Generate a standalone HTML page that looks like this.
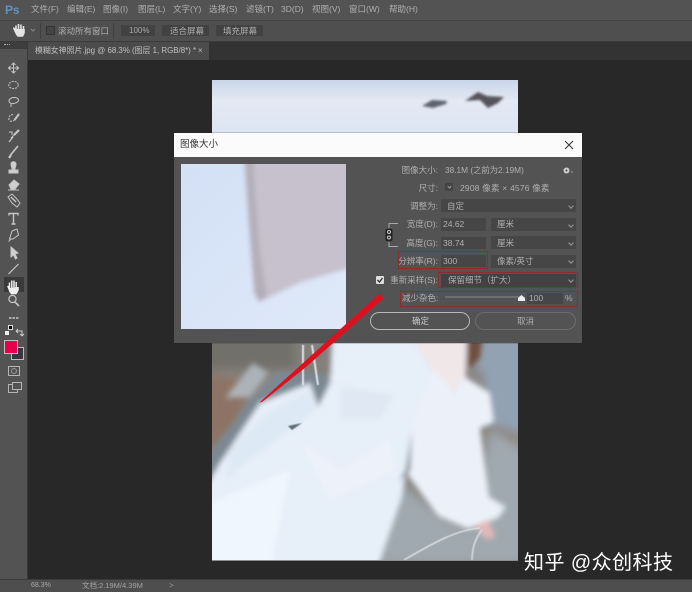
<!DOCTYPE html>
<html lang="zh"><head><meta charset="utf-8"><title>Image Size</title>
<style>
html,body{margin:0;padding:0;background:#282828}
#p{position:relative;width:692px;height:592px;overflow:hidden;background:#282828;font-family:"Liberation Sans","Noto Sans CJK SC",sans-serif;color:#b0b0b0}
.a{position:absolute}
.t{position:absolute;white-space:nowrap;font-size:8.5px;line-height:12px;filter:blur(.3px)}
.r{text-align:right}
.f{position:absolute;background:#464646}
.red{position:absolute;border:1.5px solid #8a2d2d;box-sizing:border-box}
.chev{position:absolute;width:3px;height:3px;border-right:1px solid #999;border-bottom:1px solid #999;transform:rotate(45deg)}
</style></head><body><div id="p">

<svg class="a" style="left:0;top:0" width="692" height="592" viewBox="0 0 692 592">
<defs>
<filter id="b1" x="-10%" y="-10%" width="120%" height="120%"><feGaussianBlur stdDeviation="2.600"/></filter>
<filter id="b2"><feGaussianBlur stdDeviation="5"/></filter>
<filter id="b3"><feGaussianBlur stdDeviation=".6"/></filter>
<filter id="b4"><feGaussianBlur stdDeviation="1.200"/></filter>
<clipPath id="c"><rect x="212" y="80" width="306" height="480"/></clipPath>
<linearGradient id="top" x1="0" y1="0" x2="0" y2="1"><stop offset="0" stop-color="#c9d6e8"/><stop offset=".35" stop-color="#e4e9f3"/><stop offset="1" stop-color="#dbe5f3"/></linearGradient>
</defs>
<g clip-path="url(#c)">
<rect x="212" y="80" width="306" height="60" fill="url(#top)"/>
<g filter="url(#b4)">
<path d="M422 106L432 100 447 101 446 104 433 108Z" fill="#5d6470"/>
<path d="M465 101L478 92 487 96 504 97 498 103 488 108 480 100Z" fill="#56535c"/>
</g>
<rect x="212" y="340" width="306" height="220" fill="#8a8786"/>
<g filter="url(#b2)">
<rect x="205" y="335" width="100" height="35" fill="#72706b"/>
<path d="M205 372L250 380 240 425 205 455Z" fill="#8d7365"/>
<path d="M460 335H525V435L480 420 485 380Z" fill="#93a2b2"/>
<path d="M480 420L525 440V462L480 440Z" fill="#8b847d"/>
<path d="M395 480L440 515 470 530 490 430 525 450V565H370Z" fill="#a0a9af"/>
<path d="M295 335H340V400H295Z" fill="#83807c"/>
</g>
<g filter="url(#b1)">
<path d="M225 398L253 363 268 373 250 397Z" fill="#acb2b7"/>
<path d="M250 400L280 372 330 375 330 405 270 420 225 470 205 495 205 460Z" fill="#7b8893"/>
<path d="M205 490L220 463 260 403 310 383 318 407 330 383 332 335H410L433 373 413 427 402 497 377 570H205Z" fill="#e7eff9"/>
<path d="M230 450L270 410 310 390 316 410 290 430 250 460 225 480Z" fill="#dde9f4"/>
<path d="M300 440L340 470 390 440 395 470 330 500Z" fill="#edf2fa"/>
<path d="M340 385L395 395 380 420 340 420Z" fill="#e0e8f3"/>
<path d="M205 505L290 470 270 570H205Z" fill="#eff6fd"/>
<path d="M410 335H467L465 395 453 390 433 373Z" fill="#f0e7e9"/>
<path d="M467 335H483L480 358 470 368 467 366Z" fill="#6f4f40"/>
<path d="M433 370L455 392 465 377 490 393 494 422 480 428 489 497 506 507 498 518 468 529 438 516 408 475 411 427Z" fill="#ecf1f9"/>
<path d="M412 430L406 470 398 482 410 470Z" fill="#5d6874"/>
<path d="M476 525L488 520 495 535 490 540 482 536Z" fill="#e2b8b8"/>
</g>
<path d="M288 426L302 423 292 430Z" fill="#5e6c76" filter="url(#b3)"/>
<path d="M303 345V385M312 345L318 385" stroke="#e9eef4" stroke-width="1.800" fill="none" filter="url(#b3)"/>
<path d="M404 560C430 545 455 530 480 528M472 560C472 545 478 535 482 530" stroke="#e4e8ec" stroke-width="1.300" fill="none" filter="url(#b3)"/>
</g>
<path d="M212 560.500H518" stroke="#8c8c8c" stroke-width="1"/>
</svg>

<!-- top bars -->
<div class="a" style="left:0;top:0;width:692px;height:20px;background:#535353"></div>
<div class="a" style="left:0;top:20px;width:692px;height:22px;background:#4f4f4f;border-top:1px solid #444;box-sizing:border-box"></div>
<div class="a" style="left:0;top:41px;width:692px;height:1px;background:#3a3a3a"></div>
<div class="a" style="left:0;top:42px;width:692px;height:18px;background:#333"></div>
<div class="a" style="left:28px;top:42px;width:181px;height:18px;background:#4b4b4b"></div>
<div class="t" style="left:5px;top:2px;font-size:12px;line-height:16px;font-weight:bold;color:#5f94c4;letter-spacing:-.3px">Ps</div>
<div class="t" style="left:31px;top:3px">文件(F)</div>
<div class="t" style="left:67px;top:3px">编辑(E)</div>
<div class="t" style="left:103px;top:3px">图像(I)</div>
<div class="t" style="left:138px;top:3px">图层(L)</div>
<div class="t" style="left:173px;top:3px">文字(Y)</div>
<div class="t" style="left:209px;top:3px">选择(S)</div>
<div class="t" style="left:246px;top:3px">滤镜(T)</div>
<div class="t" style="left:281px;top:3px">3D(D)</div>
<div class="t" style="left:312px;top:3px">视图(V)</div>
<div class="t" style="left:349px;top:3px">窗口(W)</div>
<div class="t" style="left:389px;top:3px">帮助(H)</div>

<svg class="a" style="left:13px;top:23px" width="22" height="14" viewBox="0 0 22 14"><path d="M3 6V2.500M5.500 6V1M8 6V1.500M10.500 6.500V3M3 6L1 5.500 3.500 11 5 13H9.500L11 10V6" stroke="#e4e4e4" stroke-width="1.600" fill="#e4e4e4"/><path d="M18 6L20 8 22 6" stroke="#888" fill="none"/></svg>
<div class="a" style="left:40px;top:23px;width:1px;height:16px;background:#3f3f3f"></div>
<div class="a" style="left:46px;top:26px;width:7px;height:7px;background:#454545;border:1px solid #333"></div>
<div class="t" style="left:58px;top:25px">滚动所有窗口</div>
<div class="a" style="left:113px;top:23px;width:1px;height:16px;background:#3f3f3f"></div>
<div class="a" style="left:121px;top:25px;width:34px;height:11px;background:#424242"></div>
<div class="t" style="left:129px;top:25px;color:#aaa;font-size:8px">100%</div>
<div class="a" style="left:162px;top:25px;width:47px;height:11px;background:#424242"></div>
<div class="t" style="left:170px;top:25px">适合屏幕</div>
<div class="a" style="left:216px;top:25px;width:47px;height:11px;background:#424242"></div>
<div class="t" style="left:223px;top:25px">填充屏幕</div>
<div class="t" style="left:35px;top:45px;color:#c0c0c0;font-size:7.900px">模糊女神照片.jpg @ 68.3% (图层 1, RGB/8*) *</div>
<div class="t" style="left:198px;top:45px;color:#c0c0c0;font-size:8px">×</div>

<!-- toolbar -->
<div class="a" style="left:0;top:42px;width:27px;height:537px;background:#535353;border-right:1px solid #3a3a3a"></div>
<div class="a" style="left:0;top:42px;width:27px;height:7px;background:#3d3d3d"></div>
<div class="a" style="left:4px;top:44px;width:6px;height:1px;border-top:1px dotted #aaa"></div>
<svg class="a" style="left:0;top:55px" width="27" height="230" viewBox="0 0 27 230" fill="none" stroke="#c6c6c6" stroke-width="1">
<path d="M13.500 8V18M8.500 13H18.500M11.500 10L13.500 8 15.500 10M11.500 16L13.500 18 15.500 16M10.500 11L8.500 13 10.500 15M16.500 11L18.500 13 16.500 15"/>
<ellipse cx="13.500" cy="30" rx="4.800" ry="3.600" stroke-dasharray="2 1"/>
<path d="M9 46C9 42 18 41 18.500 45 18.500 48 13 49 11 48.500L11 52M11 48C9 48 9 46 9 46"/>
<path d="M9 65C8 60 12 59 14 60M10 66C13 67 15 65 15.500 63" stroke-dasharray="2 1"/><path d="M14.500 65L19 59" stroke-width="2"/>
<path d="M9 77L12 77 12 80M11 83L18 76"/><path d="M14 80L19 75" stroke-width="2.200"/><path d="M9 87L13 82" stroke-width="1.300"/>
<g transform="translate(0 -8)"><path d="M10.500 108L18 99" stroke-width="1.700"/><path d="M9 111L11 108" stroke-width="2.200"/></g>
<g transform="translate(0 -13)"><path d="M11 122C11 119 16 119 16 122 16 125 15 125 15 127H12C12 125 11 125 11 122ZM9 128H18V131H9Z" fill="#cfcfcf"/></g>
<g transform="translate(0 -17)"><path d="M9 147L14 142 19 146 15 151H11Z" fill="#cfcfcf"/><path d="M8 152H19"/></g>
<g transform="translate(0 -20)"><path d="M8 162L12 159 16 163 20 168 17 172 12 168Z"/><path d="M11 162L16 167" stroke-width="1.400"/></g>
<g transform="translate(0 -21)"><path d="M9 181.500V179.500H18V181.500M13.500 179.500V190M11.500 190H15.500" stroke-width="1.400"/></g>
<g transform="translate(0 -25)"><path d="M9.500 209L12 201 17 199 18.500 205 13 209Z"/><path d="M8.500 211.500L11 209"/></g>
<g transform="translate(0 -29)"><path d="M11 221V231L13.500 229 15.500 233 17 232 15 228 18 227Z" fill="#cfcfcf"/></g>
<g transform="translate(0 -34)"><path d="M8.500 253L18.500 243" stroke-width="1.200"/></g>
</svg>
<div class="a" style="left:4px;top:277px;width:20px;height:15px;background:#3a3a3a"></div>
<svg class="a" style="left:0;top:275px" width="27" height="50" viewBox="0 0 27 50" fill="none" stroke="#dedede" stroke-width="1.100">
<path d="M9.500 14V7.500M11.800 13V5.500M14 13V5.500M16.200 13.500V7M9.500 13L7.800 11 10 16.500 11.500 18.500H16L18 15V12" stroke="#eee" stroke-width="1.500" fill="#eee"/>
<circle cx="12.500" cy="24" r="3.600" stroke="#c4c4c4" stroke-width="1.200"/><path d="M15 27L19 31" stroke="#c4c4c4" stroke-width="1.600"/>
<path d="M9 43H11.500M12.500 43H15M16 43H18.500" stroke="#c4c4c4" stroke-width="1.500"/>
</svg>
<div class="a" style="left:8px;top:325px;width:3px;height:3px;background:#000;border:1px solid #ddd"></div>
<div class="a" style="left:5px;top:331px;width:4px;height:4px;background:#eee"></div>
<svg class="a" style="left:15px;top:328px" width="10" height="10"><path d="M1 3H7V8M1 3L3 1M1 3L3 5M7 8L5 6M7 8L9 6" stroke="#ccc" fill="none"/></svg>
<div class="a" style="left:11px;top:347px;width:11px;height:11px;background:#3a3440;border:1px solid #bbb"></div>
<div class="a" style="left:4px;top:340px;width:12px;height:12px;background:#e8004c;border:1px solid #c0c0c0"></div>
<div class="a" style="left:8px;top:366px;width:10px;height:8px;border:1px solid #b4b4b4"></div>
<div class="a" style="left:11px;top:368px;width:4px;height:4px;border:1px solid #999;border-radius:50%"></div>
<div class="a" style="left:8px;top:384px;width:8px;height:7px;border:1px solid #b4b4b4"></div>
<div class="a" style="left:12px;top:382px;width:8px;height:6px;border:1px solid #b4b4b4;background:#535353"></div>

<!-- status bar -->
<div class="a" style="left:0;top:579px;width:692px;height:13px;background:#4e4e4e;border-top:1px solid #3c3c3c;box-sizing:border-box"></div>
<div class="t" style="left:31px;top:580px;font-size:7px;color:#aaa">68.3%</div>
<div class="t" style="left:82px;top:580px;font-size:7.500px;color:#a4a4a4">文档:2.19M/4.39M</div>
<div class="t" style="left:169px;top:580px;font-size:8px;color:#999">&gt;</div>

<!-- dialog -->
<div class="a" style="left:174px;top:133px;width:408px;height:210px;background:#535353;box-shadow:0 0 1px #222"></div>
<div class="a" style="left:174px;top:133px;width:408px;height:24px;background:#fbfbfb"></div>
<div class="t" style="left:180px;top:139px;font-size:9.500px;color:#333">图像大小</div>
<svg class="a" style="left:563px;top:139px" width="12" height="12"><path d="M2 2L10 10M10 2L2 10" stroke="#333" stroke-width="1"/></svg>

<svg class="a" style="left:181px;top:164px" width="165" height="165" viewBox="0 0 165 165">
<defs><filter id="pb" x="-20%" y="-20%" width="140%" height="140%"><feGaussianBlur stdDeviation="2.400"/></filter><linearGradient id="pv" x1="0" y1="0" x2="1" y2="1"><stop offset="0" stop-color="#d3e0f6"/><stop offset="1" stop-color="#dfe9f8"/></linearGradient></defs>
<rect width="165" height="165" fill="url(#pv)"/>
<g filter="url(#pb)"><path d="M64 -8H175V102L120 118 78 138 74 130 68 60Z" fill="#c6c1cc"/>
<path d="M63 -8L68 60 73 128 78 138 86 132 79 90 74 30 72 -8Z" fill="#a8a2ac" opacity=".6"/></g>
</svg>

<div class="t r" style="left:360px;width:78px;top:164px">图像大小:</div>
<div class="t" style="left:445px;top:164px;font-size:8.300px">38.1M (之前为2.19M)</div>
<svg class="a" style="left:562px;top:166px" width="12" height="9"><circle cx="4.500" cy="4.500" r="3" fill="#ccc"/><circle cx="4.500" cy="4.500" r="1" fill="#535353"/><circle cx="10" cy="6" r=".7" fill="#aaa"/></svg>
<div class="t r" style="left:360px;width:78px;top:182px">尺寸:</div>
<div class="a" style="left:445px;top:183px;width:8px;height:8px;background:#444;border-radius:1px"></div>
<div class="chev" style="left:448px;top:185px;width:2px;height:2px"></div>
<div class="t" style="left:460px;top:182px;letter-spacing:.2px">2908 像素 × 4576 像素</div>
<div class="t r" style="left:360px;width:78px;top:200px">调整为:</div>
<div class="f" style="left:441px;top:199px;width:135px;height:13px"></div>
<div class="t" style="left:447px;top:200px">自定</div><div class="chev" style="left:569px;top:204px"></div>
<div class="t r" style="left:360px;width:78px;top:218px">宽度(D):</div>
<div class="f" style="left:441px;top:218px;width:45px;height:13px"></div>
<div class="t" style="left:443px;top:218px">24.62</div>
<div class="f" style="left:491px;top:218px;width:85px;height:13px"></div>
<div class="t" style="left:497px;top:218px">厘米</div><div class="chev" style="left:569px;top:223px"></div>
<div class="t r" style="left:360px;width:78px;top:237px">高度(G):</div>
<div class="f" style="left:441px;top:237px;width:45px;height:12px"></div>
<div class="t" style="left:443px;top:237px">38.74</div>
<div class="f" style="left:491px;top:236px;width:85px;height:13px"></div>
<div class="t" style="left:497px;top:237px">厘米</div><div class="chev" style="left:569px;top:241px"></div>
<svg class="a" style="left:383px;top:220px" width="18" height="30" fill="none" stroke="#a8a8a8"><path d="M15 3.500H6V9M6 21V26.500H15"/><rect x="3" y="9" width="6" height="12" rx="2" fill="#222" stroke="#222"/><circle cx="6" cy="12" r="1.500" stroke="#ccc"/><circle cx="6" cy="17.500" r="1.500" stroke="#ccc"/></svg>
<div class="t r" style="left:360px;width:78px;top:255px">分辨率(R):</div>
<div class="f" style="left:441px;top:255px;width:45px;height:12px"></div>
<div class="t" style="left:443px;top:255px">300</div>
<div class="f" style="left:491px;top:255px;width:85px;height:13px"></div>
<div class="t" style="left:497px;top:255px">像素/英寸</div><div class="chev" style="left:569px;top:259px"></div>
<div class="a" style="left:376px;top:276px;width:8px;height:8px;background:#ddd;border-radius:1px"></div>
<svg class="a" style="left:376px;top:276px" width="8" height="8"><path d="M1.500 4L3.500 6 6.500 2" stroke="#333" stroke-width="1.300" fill="none"/></svg>
<div class="t r" style="left:360px;width:78px;top:274px">重新采样(S):</div>
<div class="f" style="left:441px;top:274px;width:135px;height:13px;background:#424242"></div>
<div class="t" style="left:448px;top:274px">保留细节（扩大）</div><div class="chev" style="left:569px;top:278px"></div>
<div class="t" style="left:402px;top:292px">减少杂色:</div>
<div class="a" style="left:445px;top:296px;width:78px;height:2px;background:#6e6e6e"></div>
<svg class="a" style="left:517px;top:294px" width="9" height="8"><path d="M4.500 1L8 4V7H1V4Z" fill="#eee"/></svg>
<div class="f" style="left:527px;top:293px;width:36px;height:11px"></div>
<div class="t" style="left:529px;top:292px">100</div>
<div class="t" style="left:565px;top:292px">%</div>
<div class="a" style="left:370px;top:312px;width:100px;height:18px;box-sizing:border-box;border:1px solid #b8b8b8;border-radius:9px"></div>
<div class="t" style="left:412px;top:315px;color:#c8c8c8">确定</div>
<div class="a" style="left:475px;top:312px;width:101px;height:18px;box-sizing:border-box;border:1px solid #6d6d6d;border-radius:9px"></div>
<div class="t" style="left:517px;top:315px">取消</div>

<div class="red" style="left:398px;top:251px;width:90px;height:18px"></div>
<div class="red" style="left:438px;top:272px;width:140px;height:16px"></div>
<div class="red" style="left:400px;top:291px;width:178px;height:16px"></div>

<svg class="a" style="left:0;top:0" width="692" height="592"><path d="M259.500 402.500L379 294 384 298 306 367 262 402Z" fill="#dd1020"/></svg>

<div class="t" style="left:524px;top:550px;font-size:20px;line-height:26px;color:#fff;letter-spacing:.45px;filter:none">知乎 @众创科技</div>
</div></body></html>
